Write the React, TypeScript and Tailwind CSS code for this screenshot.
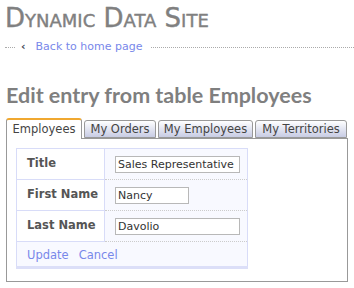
import React from 'react';

export default function App() {
  const tabs = [
    { name: "Employees", w: "w-[76px]" },
    { name: "My Orders", w: "w-[72px]" },
    { name: "My Employees", w: "w-[95px]" },
    { name: "My Territories", w: "w-[92px]" },
  ];
  const rows = [
    { label: "Title", value: "Sales Representative", width: "w-[125px]" },
    { label: "First Name", value: "Nancy", width: "w-[74px]" },
    { label: "Last Name", value: "Davolio", width: "w-[125px]" },
  ];

  return (
    <div className="w-[354px] h-[288px] overflow-hidden bg-white font-['DejaVu_Sans',sans-serif] text-[#333]">
      {/* Site title */}
      <div className="pl-[5px] pt-[3px] text-[26px] leading-[30px] text-[#808080] [font-variant:small-caps] [-webkit-text-stroke:0.4px_#808080]">
        Dynamic Data Site
      </div>

      {/* Back link */}
      <div className="flex items-center mt-[7px] h-[14px]">
        <div className="ml-[5px] w-[10px] border-t border-dotted border-[#aaa]" />
        <span className="ml-[6px] text-[11px] font-bold text-[#445]">‹</span>
        <a href="#" className="ml-[10px] text-[11px] leading-[14px] text-[#7888ea]">
          Back to home page
        </a>
        <div className="ml-[9px] flex-1 border-t border-dotted border-[#aaa]" />
      </div>

      {/* Heading */}
      <h1 className="pl-[6px] mt-[29px] font-['Lato',sans-serif] text-[21.5px] leading-[24px] font-bold text-[#7f7f7f]">
        Edit entry from table Employees
      </h1>

      {/* Tabs */}
      <div className="flex items-end pl-[6px] mt-[11px] gap-[2px] relative z-10">
        {tabs.map((tab, i) =>
          i === 0 ? (
            <div
              key={tab.name}
              className={`${tab.w} shrink-0 whitespace-nowrap text-center h-[21px] -mb-px bg-white border border-[#999] border-b-0 border-t-2 border-t-[#f0a830] rounded-t-[3px] text-[11.5px] leading-[19px] text-[#444]`}
            >
              {tab.name}
            </div>
          ) : (
            <div
              key={tab.name}
              className={`${tab.w} shrink-0 whitespace-nowrap text-center h-[18px] bg-gradient-to-b from-white to-[#c8cce4] border border-[#999] rounded-t-[3px] text-[11.5px] leading-[16px] text-[#444]`}
            >
              {tab.name}
            </div>
          )
        )}
      </div>

      {/* Panel */}
      <div className="ml-[6px] w-[342px] h-[144px] border border-[#999] pl-[9px] pt-[9px]">
        <table className="border-collapse w-[232px] border border-[#d8dcf8] border-b-[3px] border-b-[#dcdff8]">
          <tbody>
            {rows.map((r) => (
              <tr key={r.label} className="h-[31px]">
                <td className="w-[88px] border border-[#d8dcf8] pl-[10px] text-[11.5px] font-bold text-[#555] bg-white">
                  {r.label}
                </td>
                <td className="bg-[#f8f9ff] border-b border-dotted border-b-[#ccc] pl-[10px]">
                  <input
                    readOnly
                    value={r.value}
                    className={`${r.width} h-[17px] block border border-[#b8b8b8] bg-white px-[2px] text-[11px] leading-[15px] text-[#333] font-['DejaVu_Sans',sans-serif] outline-none`}
                  />
                </td>
              </tr>
            ))}
            <tr className="h-[26px]">
              <td colSpan={2} className="bg-[#f8f9ff] pl-[10px] pt-[3px] text-[11.5px]">
                <a href="#" className="text-[#7888ea]">Update</a>
                <a href="#" className="ml-[10px] text-[#7888ea]">Cancel</a>
              </td>
            </tr>
          </tbody>
        </table>
      </div>
    </div>
  );
}
